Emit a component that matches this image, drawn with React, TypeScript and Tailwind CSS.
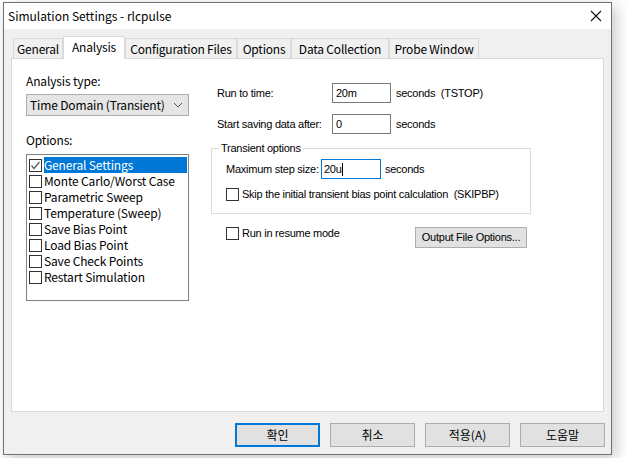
import React from 'react';

const KR = { fontFamily: '"Noto Sans CJK KR", "Noto Sans", sans-serif' };
const MS = { fontFamily: '"Liberation Sans", Arial, sans-serif' };

const tabs = [
  { label: 'General', w: 'w-[50px]' },
  { label: 'Analysis', w: 'w-[62px]', active: true },
  { label: 'Configuration Files', w: 'w-[112px]' },
  { label: 'Options', w: 'w-[54px]' },
  { label: 'Data Collection', w: 'w-[98px]' },
  { label: 'Probe Window', w: 'w-[90px]' },
];

const options = [
  'General Settings',
  'Monte Carlo/Worst Case',
  'Parametric Sweep',
  'Temperature (Sweep)',
  'Save Bias Point',
  'Load Bias Point',
  'Save Check Points',
  'Restart Simulation',
];

const CheckBox = ({ checked }: { checked?: boolean }) => (
  <span className="w-[13px] h-[13px] border border-[#333333] bg-white flex items-center justify-center shrink-0">
    {checked && (
      <svg width="11" height="11" viewBox="0 0 11 11">
        <polyline points="1.5,5.5 4,8.5 9.5,2" fill="none" stroke="#555555" strokeWidth="1.2" />
      </svg>
    )}
  </span>
);

const Button = ({ children, primary, className = '' }: { children: React.ReactNode; primary?: boolean; className?: string }) => (
  <div
    className={`h-[24px] flex items-center justify-center bg-[#e1e1e1] text-[12px] text-black ${
      primary ? 'border-2 border-[#0078d7]' : 'border border-[#adadad]'
    } ${className}`}
  >
    {children}
  </div>
);

export default function App() {
  return (
    <div className="w-[627px] h-[458px] bg-white pl-[3px] pt-[2px] overflow-hidden">
      <div className="w-[609px] h-[453px] border border-[#707070] bg-[#f0f0f0] flex flex-col shadow-[4px_4px_14px_rgba(0,0,0,0.22)]">
        {/* title bar */}
        <div className="h-[26px] bg-white flex items-center justify-between pl-[4px] pr-[9px]" style={KR}>
          <span className="text-[12px] text-black">Simulation Settings - rlcpulse</span>
          <svg width="12" height="12" viewBox="0 0 12 12">
            <path d="M1 1 L11 11 M11 1 L1 11" stroke="#111" strokeWidth="1.1" />
          </svg>
        </div>

        {/* tabs */}
        <div className="mt-[7px] ml-[7px] mr-[7px] flex flex-col">
          <div className="h-[22px] flex items-end pl-[2px] tracking-[-0.2px]" style={KR}>
            {tabs.map((t) =>
              t.active ? (
                <div
                  key={t.label}
                  className={`${t.w} h-[23px] -mb-px bg-white border-x border-t border-[#d9d9d9] relative z-10 flex items-start justify-center pt-[1px] text-[12px] text-black`}
                >
                  {t.label}
                </div>
              ) : (
                <div
                  key={t.label}
                  className={`${t.w} h-[20px] bg-[#f0f0f0] border-x border-t border-[#d9d9d9] flex items-center justify-center text-[12px] text-black`}
                >
                  {t.label}
                </div>
              )
            )}
          </div>

          {/* panel */}
          <div className="h-[354px] bg-white border border-[#d9d9d9] flex pl-[14px] pt-[14px]">
            {/* left column */}
            <div className="w-[163px] flex flex-col tracking-[-0.15px]" style={KR}>
              <div className="h-[16px] leading-[16px] text-[12px] text-black">Analysis type:</div>
              <div className="mt-[5px] h-[22px] bg-[#e5e5e5] border border-[#adadad] flex items-center justify-between pl-[3px] pr-[5px]">
                <span className="text-[12px] text-black">Time Domain (Transient)</span>
                <svg width="10" height="6" viewBox="0 0 10 6">
                  <polyline points="1,1 5,5 9,1" fill="none" stroke="#555" strokeWidth="1" />
                </svg>
              </div>
              <div className="mt-[16px] h-[16px] leading-[16px] text-[12px] text-black">Options:</div>
              <div className="mt-[6px] h-[147px] border border-[#828282] bg-white pt-[2px] pl-[2px] pr-px flex flex-col">
                {options.map((o, i) => (
                  <div key={o} className="h-[16px] flex items-center">
                    <CheckBox checked={i === 0} />
                    <span
                      className={`ml-[2px] flex-1 h-[16px] leading-[15px] text-[12px] ${
                        i === 0 ? 'bg-[#0078d7] text-white' : 'text-black'
                      }`}
                    >
                      {o}
                    </span>
                  </div>
                ))}
              </div>
            </div>

            {/* right column */}
            <div
              className="ml-[22px] w-[320px] flex flex-col text-[11px] text-black tracking-[-0.25px] whitespace-nowrap"
              style={MS}
            >
              <div className="mt-[10px] h-[20px] flex items-center pl-[6px]">
                <span className="w-[115px]">Run to time:</span>
                <div className="w-[59px] h-[20px] border border-[#7a7a7a] flex items-center pl-[3px]">20m</div>
                <span className="ml-[5px]">seconds&nbsp;&nbsp;(TSTOP)</span>
              </div>
              <div className="mt-[11px] h-[20px] flex items-center pl-[6px]">
                <span className="w-[115px]">Start saving data after:</span>
                <div className="w-[59px] h-[20px] border border-[#7a7a7a] flex items-center pl-[3px]">0</div>
                <span className="ml-[5px]">seconds</span>
              </div>

              <fieldset className="mt-[6px] border border-[#dcdcdc] pl-[14px] pb-[12px]">
                <legend className="-ml-[7px] px-[2px] h-[16px] leading-[16px]">Transient options</legend>
                <div className="mt-[3px] h-[20px] flex items-center">
                  <span className="w-[95px]">Maximum step size:</span>
                  <div className="w-[60px] h-[20px] border border-[#0078d7] flex items-center pl-[2px]">
                    20u<span className="w-px h-[13px] bg-black" />
                  </div>
                  <span className="ml-[4px]">seconds</span>
                </div>
                <div className="mt-[9px] h-[13px] flex items-center">
                  <CheckBox />
                  <span className="ml-[3px]">Skip the initial transient bias point calculation&nbsp;&nbsp;(SKIPBP)</span>
                </div>
              </fieldset>

              <div className="mt-[13px] flex items-start justify-between pl-[15px] pr-[4px]">
                <div className="h-[13px] flex items-center">
                  <CheckBox />
                  <span className="ml-[3px]">Run in resume mode</span>
                </div>
                <div className="w-[112px] h-[21px] bg-[#e1e1e1] border border-[#adadad] flex items-center justify-center">
                  Output File Options...
                </div>
              </div>
            </div>
          </div>
        </div>

        {/* buttons */}
        <div className="mt-[11px] flex justify-end gap-[10px] pr-[6px]" style={KR}>
          <Button primary className="w-[85px]">확인</Button>
          <Button className="w-[85px]">취소</Button>
          <Button className="w-[85px]">적용(A)</Button>
          <Button className="w-[85px]">도움말</Button>
        </div>
      </div>
    </div>
  );
}
